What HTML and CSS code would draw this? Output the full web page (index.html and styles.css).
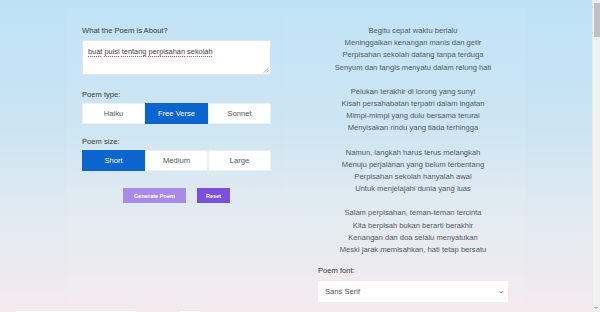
FILE: index.html
```html
<!DOCTYPE html>
<html lang="id">
<head>
  <meta charset="UTF-8" />
  <meta name="viewport" content="width=device-width, initial-scale=1.0"/>
  <title>Poem Generator</title>
  <link rel="stylesheet" href="styles.css">
</head>
<body>
  <!-- Generator -->
  <div class="hero">
    <div class="panel panel-form">
      <div class="field-label">What the Poem is About?</div>
      <div class="textbox">
        <span class="typo">buat</span> <span class="typo">puisi</span> <span class="typo">tentang</span> <span class="typo">perpisahan</span> <span class="typo">sekolah</span>
        <svg class="grip" viewBox="0 0 6 6" width="6" height="6">
          <path d="M5.5 1 L1 5.5 M5.5 3.5 L3.5 5.5" stroke="#999" stroke-width="0.8" fill="none"/>
        </svg>
      </div>

      <div class="field-label gap-top">Poem type:</div>
      <div class="seg">
        <div class="seg-btn">Haiku</div>
        <div class="seg-btn active">Free Verse</div>
        <div class="seg-btn">Sonnet</div>
      </div>

      <div class="field-label gap-top-sm">Poem size:</div>
      <div class="seg">
        <div class="seg-btn active">Short</div>
        <div class="seg-btn">Medium</div>
        <div class="seg-btn">Large</div>
      </div>

      <div class="actions">
        <button class="btn btn-generate">Generate Poem</button>
        <button class="btn btn-reset">Reset</button>
      </div>
    </div>

    <div class="panel panel-poem">
      <div class="poem">
        <p>Begitu cepat waktu berlalu<br>Meninggalkan kenangan manis dan getir<br>Perpisahan sekolah datang tanpa terduga<br>Senyum dan tangis menyatu dalam relung hati</p>
        <p>Pelukan terakhir di lorong yang sunyi<br>Kisah persahabatan terpatri dalam ingatan<br>Mimpi-mimpi yang dulu bersama terurai<br>Menyisakan rindu yang tiada terhingga</p>
        <p>Namun, langkah harus terus melangkah<br>Menuju perjalanan yang belum terbentang<br>Perpisahan sekolah hanyalah awal<br>Untuk menjelajahi dunia yang luas</p>
        <p>Salam perpisahan, teman-teman tercinta<br>Kita berpisah bukan berarti berakhir<br>Kenangan dan doa selalu menyatukan<br>Meski jarak memisahkan, hati tetap bersatu</p>
      </div>
      <div class="field-label font-label">Poem font:</div>
      <div class="select">
        <span>Sans Serif</span>
        <svg viewBox="0 0 8 8" width="6" height="6">
          <path d="M1.5 3 L4 5.5 L6.5 3" stroke="#666" stroke-width="1" fill="none"/>
        </svg>
      </div>
    </div>
  </div>

  <!-- Saved poems -->
  <div class="saved">
    <div class="saved-row">
      <div class="saved-card"></div>
      <div class="saved-tag"></div>
    </div>
  </div>

  <!-- Page scrollbar -->
  <div class="scrollbar">
    <div class="scroll-thumb"></div>
    <svg class="scroll-arrow" viewBox="0 0 8 6" width="8" height="6">
      <path d="M2.5 2 L4 3.5 L5.5 2" stroke="#777" stroke-width="0.9" fill="none"/>
    </svg>
  </div>
</body>
</html>
```

FILE: styles.css
```css
/* BASE */
* { box-sizing: border-box; }

body {
  margin: 0;
  padding-right: 8px;
  font-family: 'Liberation Sans', Arial, sans-serif;
  color: #333;
  background: linear-gradient(180deg, #bde2f7 0%, #cbe4f3 40%, #e3eaf1 70%, #f4eaee 100%) fixed;
}

/* LAYOUT */
.hero {
  width: 456px;
  margin: 0 auto;
  padding-top: 10px;
  display: grid;
  grid-template-columns: 217px 1fr;
  gap: 2px;
}
.panel {
  background: rgba(255,255,255,0.06);
  box-shadow: 0 0 1px rgba(255,255,255,0.5);
  min-height: 290px;
}
.panel-form { padding: 16px 14px; }
.panel-poem { padding: 15px 16px 0 31px; }

/* FORM */
.field-label {
  font-size: 7.6px;
  line-height: 10px;
  color: #3a3a3a;
  margin-bottom: 4px;
}
.gap-top { margin-top: 15px; margin-bottom: 3px; }
.gap-top-sm { margin-top: 13px; margin-bottom: 3px; }

.textbox {
  position: relative;
  height: 35px;
  background: #fff;
  border: 1px solid #e4e4e4;
  padding: 6px 5px;
  font-size: 7.4px;
  color: #444;
}
.typo {
  text-decoration: underline dotted #e05050;
  text-underline-offset: 1.5px;
}
.grip { position: absolute; right: 1px; bottom: 1px; }

.seg { display: flex; }
.seg-btn {
  flex: 1;
  height: 21px;
  display: flex; align-items: center; justify-content: center;
  background: #fff;
  border: 1px solid #efefef;
  font-size: 7.6px;
  color: #555;
}
.seg-btn.active {
  background: #0b65cf;
  border-color: #0b65cf;
  color: #fff;
}

.actions {
  display: flex;
  justify-content: center;
  gap: 11px;
  margin-top: 17px;
}
.btn {
  height: 15px;
  border: 0;
  padding: 0;
  font-family: inherit;
  font-size: 5.6px;
  font-weight: 700;
  color: #fff;
}
.btn-generate { width: 63px; background: #a88be8; }
.btn-reset { width: 33px; background: #7b4fe0; }

/* POEM */
.poem {
  width: 190px;
  text-align: center;
  font-size: 7.6px;
  line-height: 12.2px;
  color: #505a64;
}
.poem p { margin: 0 0 12px; }
.poem p:last-child { margin-bottom: 0; }

.font-label { margin-top: 10px; margin-bottom: 5px; }
.select {
  width: 190px;
  height: 21px;
  background: #fff;
  display: flex; align-items: center; justify-content: space-between;
  padding: 0 4px 0 7px;
  font-size: 7.6px;
  color: #555;
}

/* SAVED */
.saved {
  min-height: 400px;
  padding: 9px 16px 0;
}
.saved-row { display: flex; gap: 44px; }
.saved-card { width: 120px; height: 40px; background: #fff; }
.saved-tag { width: 20px; height: 12px; background: #fff; }

/* SCROLLBAR */
.scrollbar {
  position: fixed; top: 0; right: 0;
  width: 8px; height: 100vh;
  background: #f1f1f1;
  border-left: 1px solid #e8e8e8;
}
.scroll-thumb {
  margin: 3px 0 0 1px;
  width: 6px; height: 34px;
  background: #c1c1c1;
}
.scroll-arrow { position: absolute; bottom: 1px; left: -1px; }
```
